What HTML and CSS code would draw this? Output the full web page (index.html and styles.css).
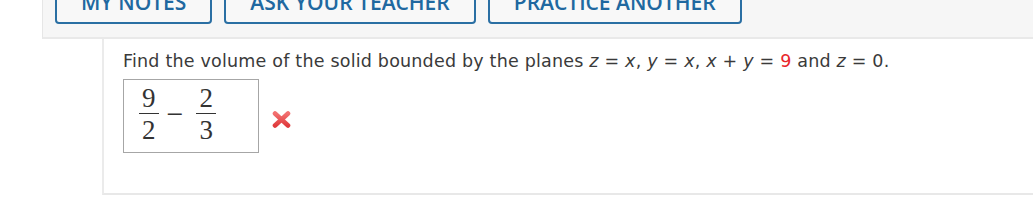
FILE: index.html
```html
<!DOCTYPE html>
<html>
<head>
<meta charset="utf-8">
<link rel="stylesheet" href="styles.css">
</head>
<body>
<div class="wrap">
  <div class="toolbar">
    <button class="btn">My Notes</button>
    <button class="btn">Ask Your Teacher</button>
    <button class="btn">Practice Another</button>
  </div>
  <div class="panel">
    <p class="question">Find the volume of the solid bounded by the planes <i>z</i> = <i>x</i>, <i>y</i> = <i>x</i>, <i>x</i> + <i>y</i> = <span class="red">9</span> and <i>z</i> = 0.</p>
    <div class="answer-row">
      <div class="answer-box">
        <span class="frac"><span class="num">9</span><span class="den">2</span></span>
        <span class="minus">&minus;</span>
        <span class="frac"><span class="num">2</span><span class="den">3</span></span>
      </div>
      <svg class="wrong" width="19" height="17" viewBox="0 0 19 17">
        <defs>
          <linearGradient id="g" x1="0" y1="0" x2="0" y2="1">
            <stop offset="0" stop-color="#f27070"/>
            <stop offset="1" stop-color="#e03c3e"/>
          </linearGradient>
        </defs>
        <path d="M3 2.5 L16 14.5 M16 2.5 L3 14.5" stroke="url(#g)" stroke-width="4.6" stroke-linecap="round" fill="none"/>
      </svg>
    </div>
  </div>
</div>
</body>
</html>
```
FILE: styles.css
```css
html, body {
  margin: 0;
  padding: 0;
  background: #ffffff;
}
.wrap {
  padding-left: 42px;
}
.toolbar {
  display: flex;
  gap: 12px;
  margin-top: -20px;
  padding: 0 0 13px 12px;
  background: #f6f6f6;
  border-left: 1px solid #e6e6e6;
  border-bottom: 2px solid #e9e9e9;
}
.btn {
  height: 44px;
  padding: 0 24px;
  border: 2px solid #2a6fa3;
  border-radius: 4px;
  background: #f8f8f8;
  color: #2068a0;
  font-family: "Open Sans", sans-serif;
  font-weight: 600;
  font-size: 21px;
  text-transform: uppercase;
  line-height: 1;
}
.panel {
  margin-left: 60px;
  padding: 11px 0 40px 19px;
  border-left: 2px solid #ebebeb;
  border-bottom: 2px solid #e8e8e8;
}
.question {
  margin: 0;
  font-family: "DejaVu Sans", Verdana, sans-serif;
  font-size: 17.5px;
  letter-spacing: 0.2px;
  line-height: 22px;
  color: #3a3a3a;
}
.question i {
  font-style: italic;
}
.red {
  color: #e8262b;
}
.answer-row {
  display: flex;
  align-items: flex-start;
  gap: 13px;
  margin-top: 7px;
}
.answer-box {
  display: flex;
  align-items: center;
  width: 136px;
  height: 74px;
  box-sizing: border-box;
  padding: 0 0 4px 15px;
  border: 1px solid #a6a6a6;
  font-family: "Liberation Serif", "Times New Roman", serif;
  font-size: 27px;
  color: #333;
}
.frac {
  display: inline-flex;
  flex-direction: column;
  align-items: center;
  line-height: 22px;
}
.num {
  padding: 0 3px 4px;
  border-bottom: 1px solid #333;
}
.den {
  padding-top: 5px;
}
.minus {
  margin: 0 13px 0 8px;
  font-size: 30px;
  line-height: 30px;
}
.wrong {
  display: block;
  margin-top: 32px;
}
```
